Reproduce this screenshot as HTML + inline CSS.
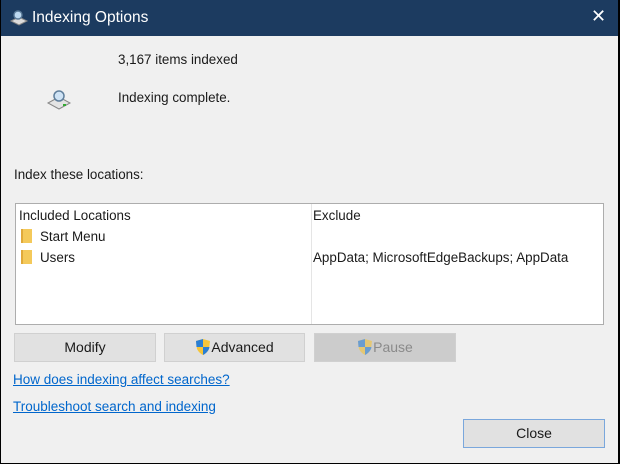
<!DOCTYPE html>
<html><head><style>
*{margin:0;padding:0;box-sizing:border-box}
body{width:620px;height:464px;background:#000;font-family:"Liberation Sans",sans-serif;font-size:13.4px;color:#1a1a1a;position:relative;overflow:hidden}
.win{position:absolute;left:1px;top:0;width:617px;height:463px;background:#f0f0f0}
.title{position:absolute;left:0;top:0;width:617px;height:36px;background:#1c3b60;color:#fff;font-size:15.5px}
.a{position:absolute;white-space:nowrap}
.btn{position:absolute;height:29px;background:#e1e1e1;border:1px solid #d0d0d0;text-align:center;line-height:27px;font-size:14px}
.link{color:#0066cc;text-decoration:underline;font-size:13.5px}
.list{position:absolute;left:14px;top:203px;width:589px;height:122px;background:#fff;border:1px solid #adadad}
.fold{display:inline-block;width:11px;height:14px;background:#f4c95a;border-left:2px solid #e0a93a;vertical-align:-2px;margin-right:8px}
</style></head><body>
<div class="win">
<div class="title">
<svg class="a" style="left:8px;top:9px" width="20" height="18" viewBox="0 0 20 18"><path d="M2 12 L10 8 L18 12 L10 16 Z" fill="#dcdcdc" stroke="#888"/><circle cx="9" cy="6" r="4" fill="#bcd8f0" stroke="#5a7a98" stroke-width="1.4"/></svg>
<span class="a" style="left:31px;top:9px">Indexing Options</span>
<span class="a" style="left:590px;top:6px;font-size:18px">✕</span>
</div>
<span class="a" style="left:117px;top:52px">3,167 items indexed</span>
<svg class="a" style="left:45px;top:88px" width="26" height="22" viewBox="0 0 26 22"><path d="M2 15 L13 9 L24 15 L13 21 Z" fill="#e4e4e4" stroke="#888"/><circle cx="13" cy="8" r="5" fill="#cfe3f5" stroke="#607f9c" stroke-width="1.5"/><rect x="17" y="16" width="3" height="2" fill="#3a3"/></svg>
<span class="a" style="left:117px;top:90px">Indexing complete.</span>
<span class="a" style="left:13px;top:167px">Index these locations:</span>
<div class="list">
<div style="position:absolute;left:295px;top:0;width:1px;height:120px;background:#e5e5e5"></div>
<span class="a" style="left:3px;top:4px">Included Locations</span>
<span class="a" style="left:297px;top:4px">Exclude</span>
<span class="a" style="left:5px;top:25px"><span class="fold"></span>Start Menu</span>
<span class="a" style="left:5px;top:46px"><span class="fold"></span>Users</span>
<span class="a" style="left:297px;top:46px">AppData; MicrosoftEdgeBackups; AppData</span>
</div>
<div class="btn" style="left:13px;top:333px;width:142px">Modify</div>
<div class="btn" style="left:163px;top:333px;width:141px"><svg width="16" height="18" viewBox="0 0 16 18" style="vertical-align:-4px"><path d="M8 1 L15 3 L14 11 Q12 15 8 17 Q4 15 2 11 L1 3 Z" fill="#f5c53a"/><path d="M8 1 L1 3 L1.5 9 L8 9 Z M8 9 L14.5 9 L14 11 Q12 15 8 17 Z" fill="#2a7fd4"/></svg>Advanced</div>
<div class="btn" style="left:313px;top:333px;width:142px;background:#cccccc;color:#8a8a8a"><svg width="16" height="18" viewBox="0 0 16 18" style="vertical-align:-4px;opacity:.6"><path d="M8 1 L15 3 L14 11 Q12 15 8 17 Q4 15 2 11 L1 3 Z" fill="#f5c53a"/><path d="M8 1 L1 3 L1.5 9 L8 9 Z M8 9 L14.5 9 L14 11 Q12 15 8 17 Z" fill="#2a7fd4"/></svg>Pause</div>
<span class="a link" style="left:12px;top:372px">How does indexing affect searches?</span>
<span class="a link" style="left:12px;top:399px">Troubleshoot search and indexing</span>
<div class="btn" style="left:462px;top:419px;width:142px;border:1px solid #7aa7dc">Close</div>
</div>
</body></html>
